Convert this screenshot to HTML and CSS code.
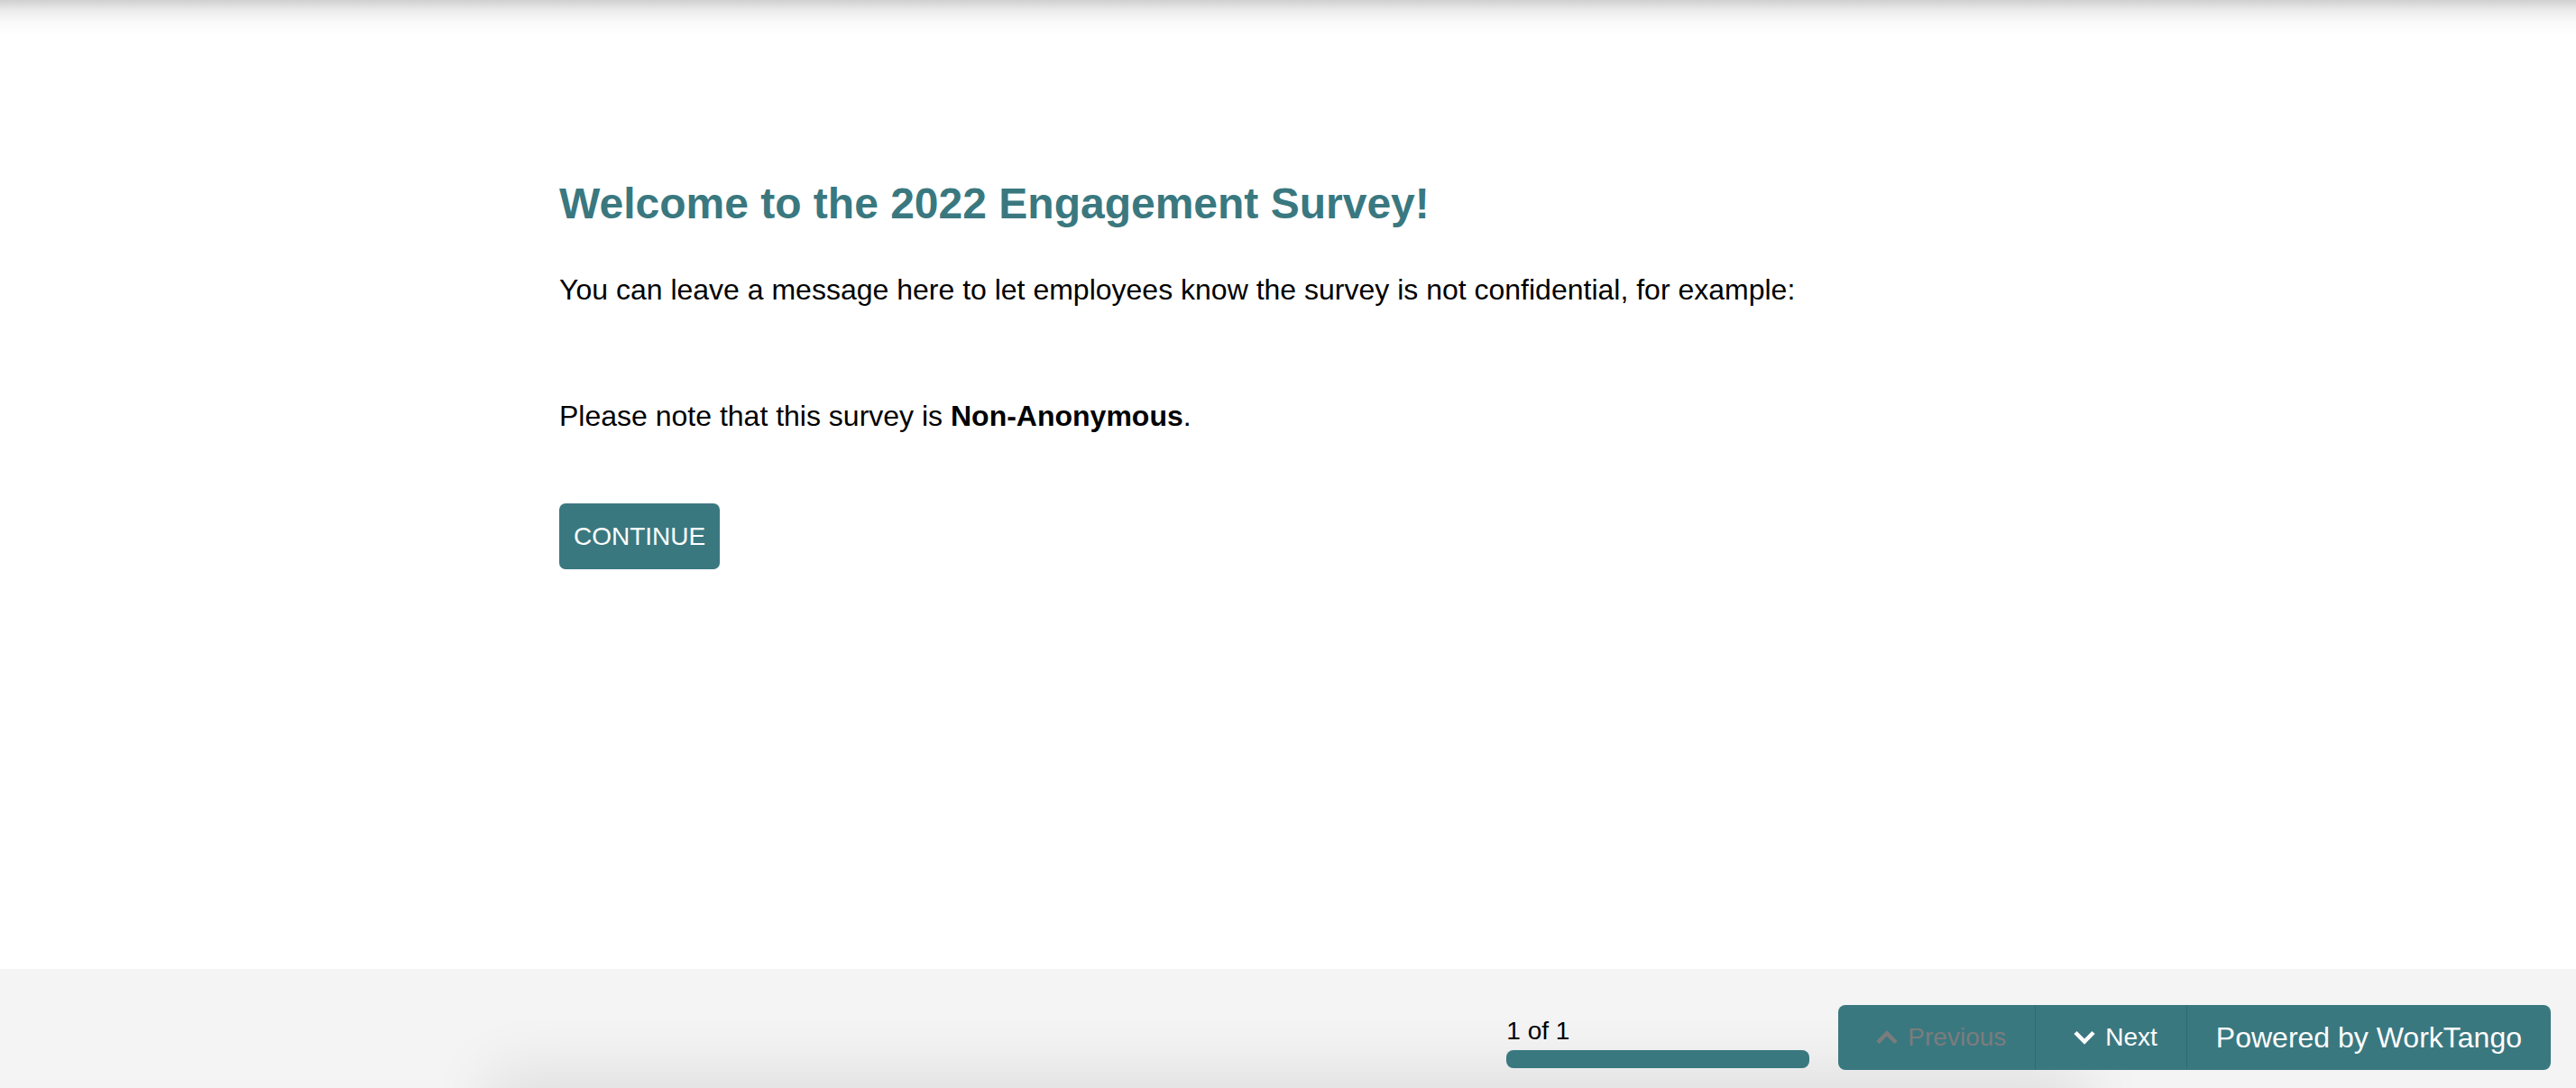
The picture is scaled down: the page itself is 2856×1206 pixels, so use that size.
FILE: index.html
```html
<!DOCTYPE html>
<html lang="en">
<head>
<meta charset="utf-8">
<title>2022 Engagement Survey</title>
<link rel="stylesheet" href="styles.css">
</head>
<body>
<div class="top-shade"></div>
<main class="main">
  <div class="container">
    <h1 class="title">Welcome to the 2022 Engagement Survey!</h1>
    <p class="text first">You can leave a message here to let employees know the survey is not confidential, for example:</p>
    <p class="text second">Please note that this survey is <strong>Non-Anonymous</strong>.</p>
    <button class="continue" type="button">CONTINUE</button>
  </div>
</main>
<footer class="footer">
  <div class="progress">
    <div class="progress-label">1 of 1</div>
    <div class="progress-bar"></div>
  </div>
  <div class="nav-group">
    <button class="nav-btn prev" type="button">
      <svg class="chev" width="34" height="16" viewBox="0 0 34 16"><polyline points="12,13.5 22,3.5 32,13.5" fill="none" stroke="currentColor" stroke-width="4.5"/></svg>
      <span>Previous</span>
    </button>
    <button class="nav-btn next" type="button">
      <svg class="chev" width="34" height="16" viewBox="0 0 34 16"><polyline points="12,2.5 22,12.5 32,2.5" fill="none" stroke="currentColor" stroke-width="4.5"/></svg>
      <span>Next</span>
    </button>
    <div class="powered">Powered by WorkTango</div>
  </div>
</footer>
</body>
</html>
```
FILE: styles.css
```css
html, body {
  margin: 0;
  padding: 0;
}
body {
  height: 100vh;
  display: flex;
  flex-direction: column;
  background: #ffffff;
  font-family: "Liberation Sans", Arial, Helvetica, sans-serif;
  color: #000000;
  overflow: hidden;
}
.top-shade {
  height: 40px;
  flex: 0 0 40px;
  background: linear-gradient(to bottom, #d0d0d0 0%, #ececec 30%, #f9f9f9 60%, #ffffff 100%);
}
.main {
  flex: 1 1 auto;
}
.container {
  width: 1616px;
  margin: 0 auto;
}
.title {
  margin: 157px 0 0 0;
  font-size: 48px;
  line-height: 58px;
  font-weight: bold;
  color: #3a7880;
}
.text {
  margin: 0;
  font-size: 32px;
  line-height: 38px;
}
.text.first {
  margin-top: 47px;
}
.text.second {
  margin-top: 102px;
}
.continue {
  margin-top: 78px;
  display: block;
  height: 73px;
  padding: 0 16px;
  border: none;
  border-radius: 7px;
  background: #3a7880;
  color: #ffffff;
  font-family: "Liberation Sans", Arial, Helvetica, sans-serif;
  font-size: 28px;
  line-height: 73px;
}
.footer {
  position: relative;
  flex: 0 0 132px;
  height: 132px;
  box-sizing: border-box;
  background: #f4f4f4;
  display: flex;
  justify-content: flex-end;
  align-items: flex-start;
  gap: 32px;
  padding: 40px 28px 0 0;
  overflow: hidden;
}
.footer::after {
  content: "";
  position: absolute;
  left: 560px;
  right: 560px;
  top: 132px;
  height: 80px;
  box-shadow: 0 0 70px 18px rgba(0, 0, 0, 0.09);
}
.progress {
  margin-top: 12px;
  width: 336px;
  position: relative;
  z-index: 1;
}
.progress-label {
  font-size: 28px;
  line-height: 34px;
}
.progress-bar {
  margin-top: 4px;
  height: 20px;
  border-radius: 8px;
  background: #3a7880;
}
.nav-group {
  position: relative;
  z-index: 1;
  display: flex;
  height: 72px;
  border-radius: 8px;
  background: #3a7880;
  overflow: hidden;
}
.nav-btn {
  display: flex;
  align-items: center;
  gap: 11px;
  height: 72px;
  padding: 0 32px;
  border: none;
  border-right: 1px solid #2f6a71;
  background: transparent;
  color: #ffffff;
  font-family: "Liberation Sans", Arial, Helvetica, sans-serif;
  font-size: 28px;
  line-height: 72px;
}
.nav-btn.prev {
  color: #7c7c7c;
}
.chev {
  display: block;
}
.powered {
  padding: 0 32px;
  color: #ffffff;
  font-size: 32px;
  line-height: 72px;
  white-space: nowrap;
}
```
